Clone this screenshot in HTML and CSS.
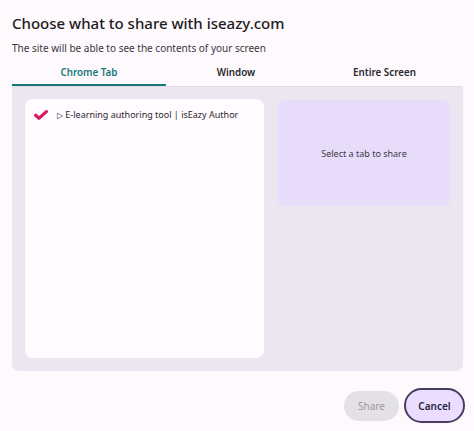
FILE: index.html
```html
<!DOCTYPE html>
<html>
<head>
<meta charset="utf-8">
<link rel="stylesheet" href="styles.css">
</head>
<body>
<div class="dialog">
  <h1 class="title">Choose what to share with iseazy.com</h1>
  <p class="subtitle">The site will be able to see the contents of your screen</p>
  <div class="tabs">
    <div class="tab active">Chrome Tab</div>
    <div class="tab">Window</div>
    <div class="tab">Entire Screen</div>
  </div>
  <div class="panel">
    <div class="list">
      <div class="item">
        <svg class="check" width="14" height="10" viewBox="0 0 14 10"><path d="M1.6 5.2 L5 8.2 L12.4 1.6" fill="none" stroke="#d81b63" stroke-width="3.2" stroke-linecap="round" stroke-linejoin="round"/></svg>
        <span class="item-text"><span class="tri">▷</span> E-learning authoring tool | isEazy Author</span>
      </div>
    </div>
    <div class="preview">Select a tab to share</div>
  </div>
  <div class="actions">
    <button class="btn share">Share</button>
    <button class="btn cancel">Cancel</button>
  </div>
</div>
</body>
</html>
```
FILE: styles.css
```css
html, body {
  margin: 0;
  padding: 0;
  background: #fdf9fd;
}
body {
  width: 474px;
  height: 431px;
  overflow: hidden;
  font-family: "Noto Sans", "Open Sans", sans-serif;
  color: #1d1b20;
}
.dialog {
  padding: 12px 11px 0 12px;
}
.title {
  margin: 0;
  font-size: 15px;
  font-weight: 500;
  line-height: 22px;
  color: #1d1b20;
}
.subtitle {
  margin: 6px 0 0;
  font-size: 10px;
  line-height: 16px;
  color: #3a373d;
}
.tabs {
  display: grid;
  grid-template-columns: 154px 140px 1fr;
  margin-top: 5px;
  border-bottom: 1px solid #e2dde6;
}
.tab {
  text-align: center;
  font-size: 9.8px;
  font-weight: 600;
  line-height: 16px;
  padding: 4px 0 5px;
  color: #2b282e;
}
.tab.active {
  color: #17797a;
  box-shadow: inset 0 -2px 0 #17797a;
}
.panel {
  display: flex;
  gap: 14px;
  background: #ebe6ef;
  border-radius: 0 0 7px 7px;
  padding: 12px 13px 13px 13px;
  height: 259px;
}
.list {
  width: 239px;
  background: #fffbfe;
  border-radius: 8px;
  padding: 8px 9px;
  box-sizing: border-box;
}
.item {
  display: flex;
  align-items: center;
  gap: 9px;
  height: 15px;
}
.check {
  flex: none;
}
.item-text {
  font-size: 9px;
  color: #2b282e;
  white-space: nowrap;
}
.tri {
  font-size: 8px;
}
.preview {
  width: 172px;
  height: 106px;
  margin-top: 1px;
  background: #e8dcfb;
  border-radius: 6px;
  display: flex;
  align-items: center;
  justify-content: center;
  font-size: 9px;
  color: #3f3a48;
}
.actions {
  display: flex;
  justify-content: flex-end;
  align-items: center;
  gap: 5px;
  margin-top: 17px;
  margin-right: -2px;
}
.btn {
  font-family: "Noto Sans", "Open Sans", sans-serif;
  font-size: 10px;
  border-radius: 18px;
  cursor: default;
  padding: 0;
}
.share {
  width: 55px;
  height: 30px;
  border: none;
  background: #e3e0e6;
  color: #9c979f;
}
.cancel {
  width: 61px;
  height: 35px;
  border: 2px solid #4a3d62;
  background: #eaddff;
  color: #2a1f3d;
  font-weight: 600;
}
```
